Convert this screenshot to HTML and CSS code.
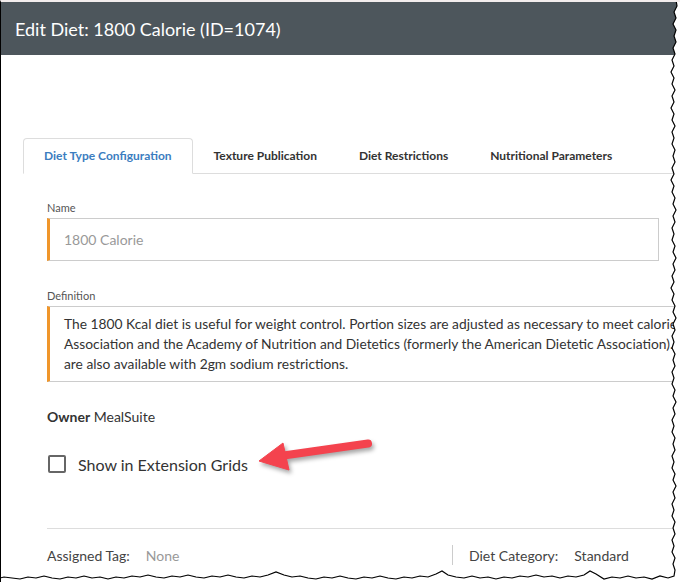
FILE: index.html
```html
<!DOCTYPE html>
<html lang="en">
<head>
  <meta charset="UTF-8">
  <title>Edit Diet: 1800 Calorie</title>
  <link rel="stylesheet" href="styles.css">
</head>
<body>
  <div class="window">
    <div class="modal-header">Edit Diet: 1800 Calorie (ID=1074)</div>

    <ul class="tabs">
      <li class="tab active">Diet Type Configuration</li>
      <li class="tab">Texture Publication</li>
      <li class="tab">Diet Restrictions</li>
      <li class="tab">Nutritional Parameters</li>
    </ul>

    <div class="tab-panel">
      <label class="field-label">Name</label>
      <div class="field-box name-box">1800 Calorie</div>

      <label class="field-label def-label">Definition</label>
      <div class="field-box def-box">
        The 1800 Kcal diet is useful for weight control. Portion sizes are adjusted as necessary to meet calorie needs. This diet is consistent with the American Diabetes<br>
        Association and the Academy of Nutrition and Dietetics (formerly the American Dietetic Association). These diets<br>
        are also available with 2gm sodium restrictions.
      </div>

      <div class="owner"><b>Owner</b> MealSuite</div>

      <div class="check-row">
        <span class="checkbox"></span>
        <span class="check-label">Show in Extension Grids</span>
      </div>

      <div class="footer-row">
        <div class="footer-cell tag-cell">
          <span>Assigned Tag:</span>
          <span class="muted">None</span>
        </div>
        <div class="footer-cell cat-cell">
          <span>Diet Category:</span>
          <span class="value">Standard</span>
        </div>
      </div>
    </div>

    <!-- callout arrow -->
    <svg class="arrow" width="130" height="50" viewBox="0 0 130 50">
      <g fill="#f4434e" stroke="#f4434e">
        <line x1="30" y1="24" x2="118" y2="11.5" stroke-width="8" stroke-linecap="round"/>
        <polygon points="9,29 33,11 39,38" stroke-width="1" stroke-linejoin="round"/>
      </g>
    </svg>

    <!-- torn paper edge -->
    <svg class="torn" width="680" height="582" viewBox="0 0 680 582">
      <polygon fill="#fff" points="676,0 677,6 674,12 676,18 673,24 676,30 674,36 676,42 673,48 675,54 672,60 674,66 671,72 674,78 672,84 675,90 672,96 674,102 671,108 674,114 672,120 675,126 672,132 674,138 672,144 675,150 673,156 675,162 672,168 674,174 671,180 674,186 672,192 675,198 673,204 676,210 673,216 675,222 672,228 674,234 672,240 675,246 673,252 676,258 673,264 675,270 672,276 674,282 671,288 674,294 672,300 675,306 673,312 676,318 673,324 675,330 672,336 674,342 672,348 675,354 673,360 675,366 672,372 674,378 672,384 675,390 673,396 676,402 673,408 675,414 672,420 674,426 672,432 675,438 673,444 675,450 672,456 674,462 672,468 675,474 673,480 676,486 673,492 675,498 672,504 674,510 672,516 675,522 673,528 675,534 672,540 674,546 672,552 675,558 673,564 675,570 674,576 668,578 660,576 652,579 644,577 636,578 628,576 620,578 612,577 604,579 596,574 590,571 584,575 576,577 568,576 560,578 552,576 544,577 536,575 528,577 520,576 512,578 504,577 496,579 488,577 480,578 472,576 464,578 456,577 448,575 442,571 436,574 428,577 420,576 412,578 404,577 396,579 388,578 380,576 372,578 364,577 356,579 348,578 340,576 332,578 324,577 316,579 308,578 300,576 292,577 284,575 276,572 268,575 260,577 252,576 244,578 236,577 228,575 220,577 212,576 204,578 196,577 188,575 180,577 172,576 164,578 156,577 148,575 140,577 132,576 124,578 116,577 108,579 100,577 92,578 84,576 76,578 68,577 60,579 52,578 44,576 36,578 28,577 20,579 12,578 4,577 0,578 0,582 680,582 680,0"/>
      <polyline fill="none" stroke="#000" stroke-width="1.2" points="676,0 677,6 674,12 676,18 673,24 676,30 674,36 676,42 673,48 675,54 672,60 674,66 671,72 674,78 672,84 675,90 672,96 674,102 671,108 674,114 672,120 675,126 672,132 674,138 672,144 675,150 673,156 675,162 672,168 674,174 671,180 674,186 672,192 675,198 673,204 676,210 673,216 675,222 672,228 674,234 672,240 675,246 673,252 676,258 673,264 675,270 672,276 674,282 671,288 674,294 672,300 675,306 673,312 676,318 673,324 675,330 672,336 674,342 672,348 675,354 673,360 675,366 672,372 674,378 672,384 675,390 673,396 676,402 673,408 675,414 672,420 674,426 672,432 675,438 673,444 675,450 672,456 674,462 672,468 675,474 673,480 676,486 673,492 675,498 672,504 674,510 672,516 675,522 673,528 675,534 672,540 674,546 672,552 675,558 673,564 675,570 674,576 668,578 660,576 652,579 644,577 636,578 628,576 620,578 612,577 604,579 596,574 590,571 584,575 576,577 568,576 560,578 552,576 544,577 536,575 528,577 520,576 512,578 504,577 496,579 488,577 480,578 472,576 464,578 456,577 448,575 442,571 436,574 428,577 420,576 412,578 404,577 396,579 388,578 380,576 372,578 364,577 356,579 348,578 340,576 332,578 324,577 316,579 308,578 300,576 292,577 284,575 276,572 268,575 260,577 252,576 244,578 236,577 228,575 220,577 212,576 204,578 196,577 188,575 180,577 172,576 164,578 156,577 148,575 140,577 132,576 124,578 116,577 108,579 100,577 92,578 84,576 76,578 68,577 60,579 52,578 44,576 36,578 28,577 20,579 12,578 4,577 0,578"/>
    </svg>
  </div>
</body>
</html>
```

FILE: styles.css
```css
body { margin: 0; background: #fff; font-family: Lato, 'Open Sans', Arial, sans-serif; color: #333; }
.window { position: relative; width: 680px; height: 582px; box-sizing: border-box; border-left: 1px solid #000; border-top: 2px solid #f3eded; overflow: hidden; background: #fff; }
.modal-header { height: 53px; background: #4d565c; color: #fff; font-size: 18px; display: flex; align-items: center; padding-left: 14px; }

.tabs { list-style: none; display: flex; margin: 83px 0 0 22px; padding: 0; border-bottom: 1px solid #ddd; }
.tab { height: 34px; line-height: 34px; padding: 0 20px; font-size: 12px; font-weight: 700; color: #333; border: 1px solid transparent; margin-bottom: -1px; }
.tab.active { color: #3b7dc0; border-color: #ddd #ddd #fff; border-radius: 4px 4px 0 0; background: #fff; }

.tab-panel { padding: 27px 21px 0 46px; }
.field-label { display: block; font-size: 11px; line-height: 14px; color: #555; margin-bottom: 3px; }
.def-label { margin-top: 28px; }
.field-box { border: 1px solid #ccc; border-left: 3px solid #f0962a; font-size: 14px; padding-left: 14px; }
.name-box { height: 41px; line-height: 41px; color: #999; }
.def-box { margin-right: -300px; padding-top: 7px; padding-bottom: 7px; font-size: 13.8px; line-height: 20px; white-space: nowrap; color: #333; }

.owner { margin-top: 25px; font-size: 14px; line-height: 20px; color: #333; }
.owner b { font-weight: 700; }

.check-row { display: flex; align-items: center; gap: 12px; margin-top: 27px; height: 20px; }
.checkbox { width: 14px; height: 14px; border: 2px solid #666; border-radius: 2px; margin-left: 1px; }
.check-label { font-size: 16px; color: #333; }

.footer-row { display: flex; margin-top: 54px; margin-right: -30px; border-top: 1px solid #ddd; padding-top: 16px; font-size: 14px; color: #444; }
.footer-cell { display: flex; align-items: center; gap: 16px; height: 20px; }
.tag-cell { width: 405px; }
.cat-cell { border-left: 1px solid #ccc; padding-left: 16px; }
.muted { color: #999; }
.value { color: #444; }

.arrow { position: absolute; left: 249px; top: 430px; filter: drop-shadow(2px 3px 2px rgba(0,0,0,0.35)); }
.torn { position: absolute; left: -1px; top: -2px; pointer-events: none; }
```
